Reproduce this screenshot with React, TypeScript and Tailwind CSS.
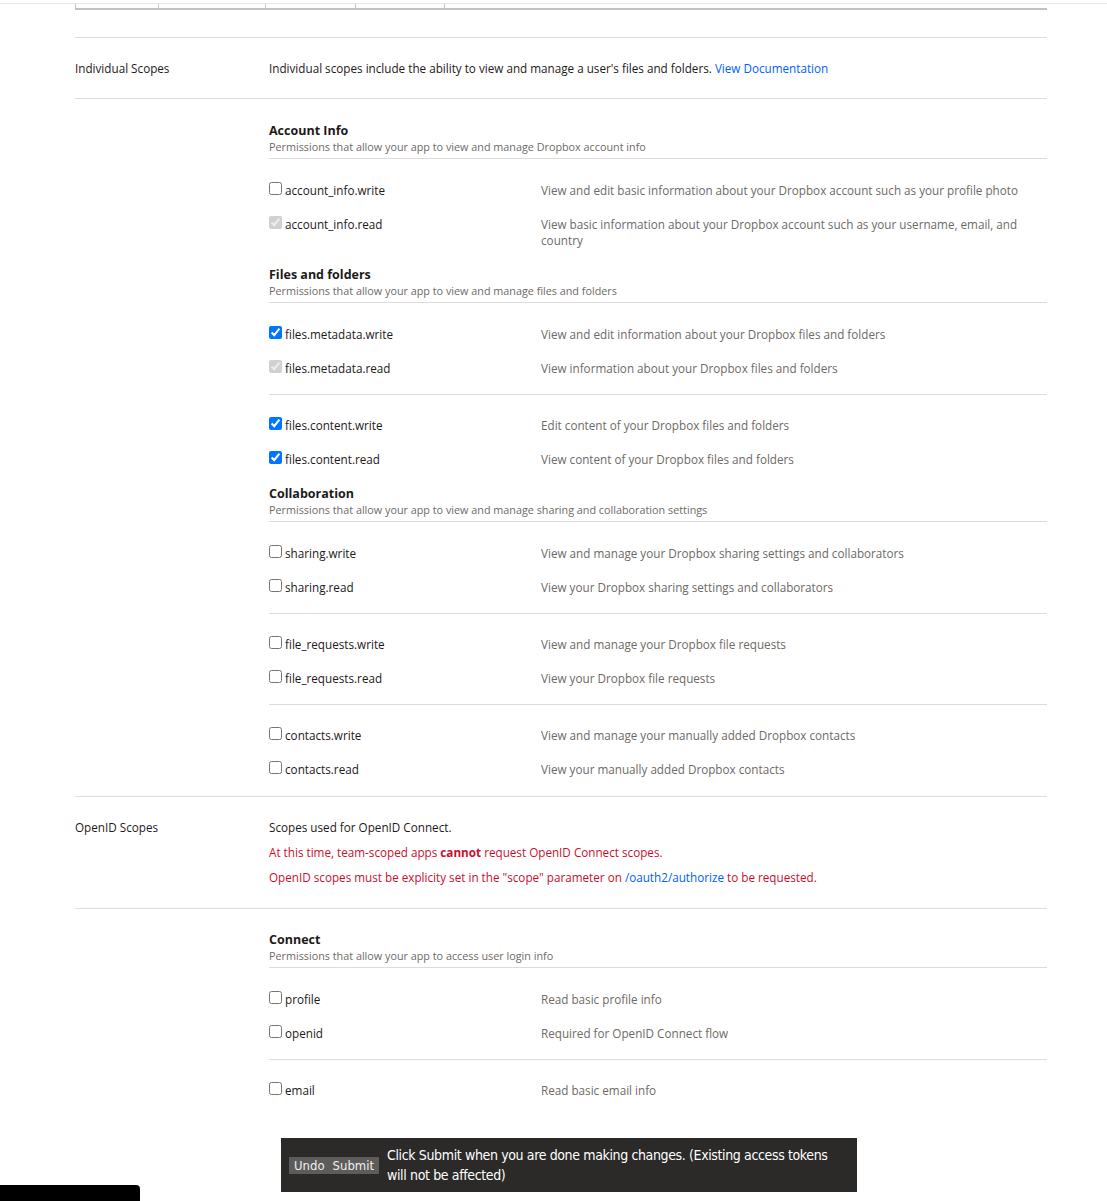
import React from "react";

type Scope = { name: string; desc: string; checked?: boolean; locked?: boolean };
type Group = { title: string; subtitle: string; lists: Scope[][] };

const individual: Group[] = [
  {
    title: "Account Info",
    subtitle: "Permissions that allow your app to view and manage Dropbox account info",
    lists: [
      [
        { name: "account_info.write", desc: "View and edit basic information about your Dropbox account such as your profile photo" },
        { name: "account_info.read", desc: "View basic information about your Dropbox account such as your username, email, and country", checked: true, locked: true },
      ],
    ],
  },
  {
    title: "Files and folders",
    subtitle: "Permissions that allow your app to view and manage files and folders",
    lists: [
      [
        { name: "files.metadata.write", desc: "View and edit information about your Dropbox files and folders", checked: true },
        { name: "files.metadata.read", desc: "View information about your Dropbox files and folders", checked: true, locked: true },
      ],
      [
        { name: "files.content.write", desc: "Edit content of your Dropbox files and folders", checked: true },
        { name: "files.content.read", desc: "View content of your Dropbox files and folders", checked: true },
      ],
    ],
  },
  {
    title: "Collaboration",
    subtitle: "Permissions that allow your app to view and manage sharing and collaboration settings",
    lists: [
      [
        { name: "sharing.write", desc: "View and manage your Dropbox sharing settings and collaborators" },
        { name: "sharing.read", desc: "View your Dropbox sharing settings and collaborators" },
      ],
      [
        { name: "file_requests.write", desc: "View and manage your Dropbox file requests" },
        { name: "file_requests.read", desc: "View your Dropbox file requests" },
      ],
      [
        { name: "contacts.write", desc: "View and manage your manually added Dropbox contacts" },
        { name: "contacts.read", desc: "View your manually added Dropbox contacts" },
      ],
    ],
  },
];

const openid: Group[] = [
  {
    title: "Connect",
    subtitle: "Permissions that allow your app to access user login info",
    lists: [
      [
        { name: "profile", desc: "Read basic profile info" },
        { name: "openid", desc: "Required for OpenID Connect flow" },
      ],
      [{ name: "email", desc: "Read basic email info" }],
    ],
  },
];

function ScopeRow({ s }: { s: Scope }) {
  return (
    <div className="flex pb-[10px] pt-[8px] leading-4">
      <label className="flex w-[272px] shrink-0 items-start">
        <input
          type="checkbox"
          defaultChecked={s.checked}
          disabled={s.locked}
          className="m-0 mr-[3px] h-[13px] w-[13px]"
        />
        <span className="text-[#1e1919]">{s.name}</span>
      </label>
      <div className="text-[#6e6a66]">{s.desc}</div>
    </div>
  );
}

// last = group is the final one of its section (no heading follows)
function ScopeGroup({ g, last }: { g: Group; last: boolean }) {
  return (
    <div>
      <div className="border-b border-[#dcdcdc] pb-[4px]">
        <div className="pt-[1px] text-[12.5px] font-bold leading-[17px] text-[#1e1919]">{g.title}</div>
        <div className="text-[10.8px] leading-[15px] text-[#6e6a66]">{g.subtitle}</div>
      </div>
      {g.lists.map((list, i) => {
        const end = i === g.lists.length - 1;
        const pb = end ? (last ? "pb-[9px]" : "pb-[7px]") : "pb-[8px]";
        const pt = i === 0 ? "pt-[15px]" : "border-t border-[#dcdcdc] pt-[14px]";
        return (
          <div key={i} className={`${pt} ${pb}`}>
            {list.map((s) => (
              <ScopeRow key={s.name} s={s} />
            ))}
          </div>
        );
      })}
    </div>
  );
}

export default function App() {
  return (
    <div
      className="relative min-h-[1201px] w-full bg-white text-[11.7px] text-[#1e1919]"
      style={{ fontFamily: '"Open Sans", "Noto Sans", sans-serif' }}
    >
      <div className="h-[4px] border-b border-[#e8e8e8]" />
      <div className="mx-[75px] flex h-[6px] w-[972px] border-b-2 border-[#c1c1c1]">
        <div className="w-[83px] border-l border-[#a9cbe8]" />
        <div className="w-[107px] border-l border-[#c8c8c8]" />
        <div className="w-[90px] border-l border-[#c8c8c8]" />
        <div className="w-[89px] border-l border-[#a9cbe8]" />
        <div className="flex-1 border-l border-[#a9cbe8]" />
      </div>

      <div className="ml-[75px] mt-[27px] w-[972px]">
        {/* Individual scopes */}
        <div className="flex border-t border-[#dcdcdc] pb-[17px] pt-[18px] leading-[25px]">
          <div className="w-[194px] shrink-0">Individual Scopes</div>
          <div>
            Individual scopes include the ability to view and manage a user's files and folders.{" "}
            <a className="text-[#0061fe]">View Documentation</a>
          </div>
        </div>
        <div className="border-t border-[#dcdcdc] pl-[194px] pt-[22px]">
          {individual.map((g, i) => (
            <ScopeGroup key={g.title} g={g} last={i === individual.length - 1} />
          ))}
        </div>

        {/* OpenID scopes */}
        <div className="flex border-t border-[#dcdcdc] pb-[18px] pt-[18px] leading-[25px]">
          <div className="w-[194px] shrink-0">OpenID Scopes</div>
          <div>
            <p>Scopes used for OpenID Connect.</p>
            <p className="text-[#c8102e]">
              At this time, team-scoped apps <b>cannot</b> request OpenID Connect scopes.
            </p>
            <p className="text-[#c8102e]">
              OpenID scopes must be explicity set in the "scope" parameter on{" "}
              <a className="text-[#0061fe]">/oauth2/authorize</a> to be requested.
            </p>
          </div>
        </div>
        <div className="border-t border-[#dcdcdc] pl-[194px] pt-[21px]">
          {openid.map((g, i) => (
            <ScopeGroup key={g.title} g={g} last={i === openid.length - 1} />
          ))}
        </div>
      </div>

      {/* Save bar */}
      <div
        className="fixed bottom-[9px] left-[281px] flex h-[54px] w-[576px] items-center gap-[8px] bg-[#2b2a29] px-[8px] text-[14px] leading-[20px] tracking-[-0.37px] text-white"
        style={{ fontFamily: '"Liberation Sans Narrow", "DejaVu Sans Condensed", "Roboto Condensed", sans-serif' }}
      >
        <div className="flex shrink-0 gap-[8px] bg-[#5e5c5a] px-[5px] text-[13px] leading-[17px] tracking-normal text-[#f0f0f0]">
          <button>Undo</button>
          <button>Submit</button>
        </div>
        <div>
          Click Submit when you are done making changes. (Existing access tokens will not be affected)
        </div>
      </div>
      <div className="fixed bottom-0 left-0 h-[16px] w-[140px] rounded-tr-[4px] bg-black" />
    </div>
  );
}
